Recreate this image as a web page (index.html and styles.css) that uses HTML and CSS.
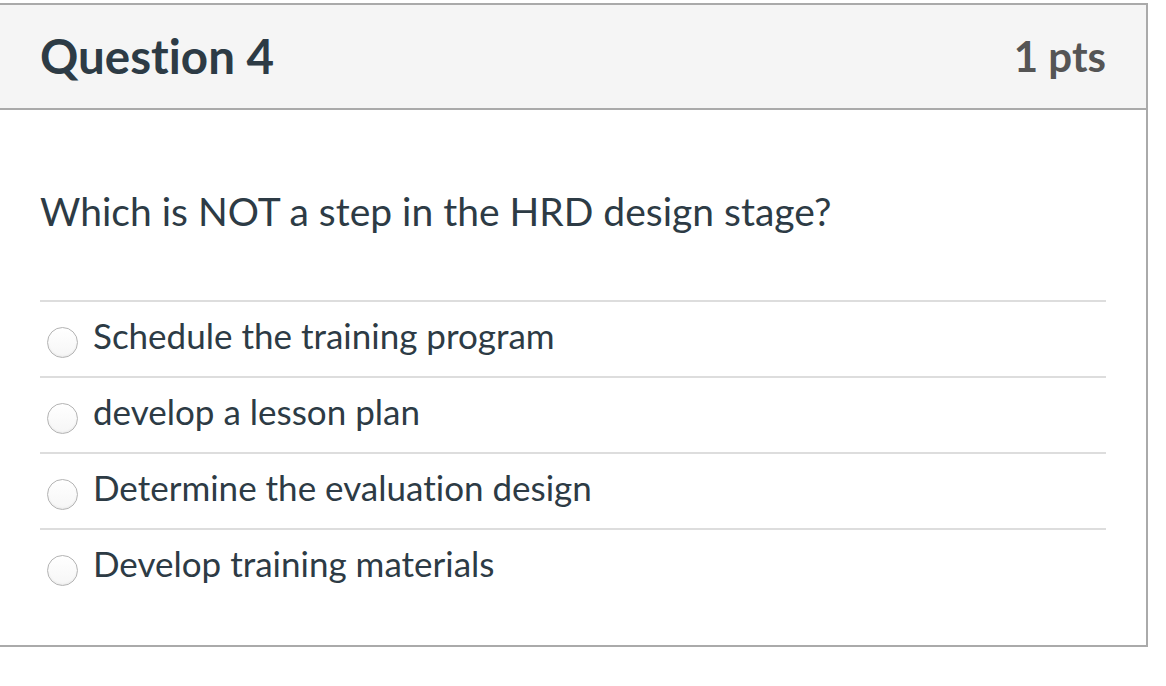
FILE: index.html
```html
<!DOCTYPE html>
<html>
<head>
<meta charset="utf-8">
<link rel="stylesheet" href="styles.css">
</head>
<body>
<div class="question">
  <div class="header">
    <h2 class="title">Question 4</h2>
    <div class="pts">1 pts</div>
  </div>
  <div class="content">
    <p class="text">Which is NOT a step in the HRD design stage?</p>
    <div class="answers">
      <label class="answer"><span class="radio"></span><span class="label">Schedule the training program</span></label>
      <label class="answer"><span class="radio"></span><span class="label">develop a lesson plan</span></label>
      <label class="answer"><span class="radio"></span><span class="label">Determine the evaluation design</span></label>
      <label class="answer"><span class="radio"></span><span class="label">Develop training materials</span></label>
    </div>
  </div>
</div>
</body>
</html>
```

FILE: styles.css
```css
html, body {
  margin: 0;
  padding: 0;
  background: #fff;
}
body {
  font-family: Lato, "Open Sans", sans-serif;
  color: #2d3b45;
  font-variant-ligatures: none;
}
.question {
  margin: 3px 0 0 -10px;
  width: 1158px;
  border: 2px solid #aaaaaa;
  box-sizing: border-box;
  height: 644px;
}
.header {
  background: #f5f5f5;
  border-bottom: 2px solid #aaaaaa;
  height: 105px;
  box-sizing: border-box;
  display: flex;
  align-items: center;
  justify-content: space-between;
  padding: 0 40px 0 48px;
}
.title {
  margin: 0 0 2px;
  font-size: 47.5px;
  font-weight: 700;
  color: #2d3b45;
}
.pts {
  font-size: 42px;
  font-weight: 700;
  color: #555555;
  margin-bottom: 2px;
}
.content {
  padding: 0 40px 0 48px;
}
.text {
  margin: 0;
  padding-top: 78px;
  height: 112px;
  font-size: 39px;
  line-height: 46px;
}
.answers {
  display: flex;
  flex-direction: column;
}
.answer {
  display: flex;
  align-items: center;
  gap: 15px;
  height: 76px;
  border-top: 2px solid #dddddd;
  box-sizing: border-box;
  padding-left: 7px;
  font-size: 35px;
}
.radio {
  width: 31px;
  height: 31px;
  flex: none;
  border-radius: 50%;
  border: 1.5px solid #b4b4b4;
  box-sizing: border-box;
  background: linear-gradient(#ffffff, #f6f6f6);
  box-shadow: inset 0 -1px 2px rgba(0,0,0,0.06);
  margin-top: 6px;
}
.label {
  line-height: 42px;
  margin-bottom: 8px;
}
```
